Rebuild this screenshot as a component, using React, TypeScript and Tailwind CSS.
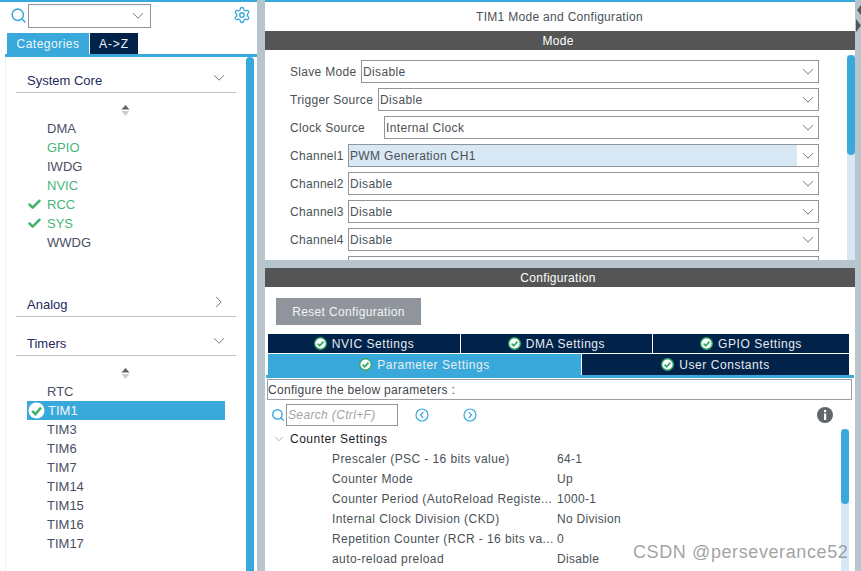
import React from "react";
import { ChevronDown, Search, Settings, Check } from "lucide-react";

const font = "font-['Liberation_Sans',Arial,sans-serif]";

function Chev({ className = "" }: { className?: string }) {
  return (
    <svg width="12" height="8" viewBox="0 0 12 8" fill="none" className={className}>
      <path d="M1 1.2 L6 6.2 L11 1.2" stroke="#6f7880" strokeWidth="1" />
    </svg>
  );
}

function SortIcon() {
  return (
    <svg width="9" height="11" viewBox="0 0 9 11" className="block">
      <path d="M4.5 0 L8.5 4.5 H0.5 Z" fill="#5f6468" />
      <path d="M4.5 11 L8.5 6 H0.5 Z" fill="#c9cdd0" />
    </svg>
  );
}

function CircleCheck() {
  return (
    <svg width="13" height="13" viewBox="0 0 13 13" className="shrink-0">
      <circle cx="6.5" cy="6.5" r="5.8" fill="#ffffff" stroke="#35a765" strokeWidth="1.4" />
      <path d="M3.6 6.7 L5.7 8.8 L9.5 4.6" fill="none" stroke="#35a765" strokeWidth="1.8" />
    </svg>
  );
}

function SectionHead({ title, open, className = "" }: { title: string; open: boolean; className?: string }) {
  return (
    <div className={`ml-[16px] w-[220px] h-[20px] border-b border-[#b9c5cc] flex items-start justify-between pl-[11px] pr-[12px] ${className}`}>
      <span className="text-[13px] leading-[16px] text-[#1d2a5c]">{title}</span>
      <Chev className={open ? "mt-[1px] mr-[-1px]" : "mt-[1px] mr-[-1px] -rotate-90"} />
    </div>
  );
}

function Item({ name, color = "text-[#4b4f63]", check }: { name: string; color?: string; check?: boolean }) {
  return (
    <div className="h-[19px] flex items-center relative pl-[47px]">
      {check && <Check size={15} strokeWidth={4} color="#45b26b" className="absolute left-[27px] top-[2px]" />}
      <span className={`text-[13px] leading-[19px] ${color}`}>{name}</span>
    </div>
  );
}

function ModeRow({ label, labelW, value, hi }: { label: string; labelW: string; value: string; hi?: boolean }) {
  return (
    <div className="flex items-center h-[23px] mb-[5px] pl-[25px]">
      <span className={`${labelW} shrink-0 text-[12px] tracking-[0.3px] text-[#4a5156] whitespace-nowrap`}>{label}</span>
      <div className="w-0 grow mr-[36px] h-[23px] border border-[#8f959b] flex items-center justify-between bg-white">
        <span className={`h-full grow flex items-center pl-[1px] text-[12px] tracking-[0.35px] text-[#4a5156] ${hi ? "bg-[#d9e8f5]" : ""}`}>{value}</span>
        <span className="w-[21px] shrink-0 flex justify-center"><Chev /></span>
      </div>
    </div>
  );
}

function Tab({ label, className }: { label: string; className: string }) {
  return (
    <div className={`flex items-center justify-center gap-[5px] text-[12px] tracking-[0.55px] text-[#e8edf2] ${className}`}>
      <CircleCheck />
      <span>{label}</span>
    </div>
  );
}

function Param({ name, value }: { name: string; value: string }) {
  return (
    <div className="flex h-[20px] items-center pl-[67px] text-[12px] text-[#4a5156]">
      <span className="w-[225px] shrink-0 whitespace-nowrap tracking-[0.42px]">{name}</span>
      <span className="tracking-[0.3px]">{value}</span>
    </div>
  );
}

export default function App() {
  return (
    <div className={`relative w-[861px] h-[571px] overflow-hidden bg-[#b9c5cc] flex ${font}`}>
      {/* left panel */}
      <div className="w-[257px] h-full bg-white border-t-2 border-[#39a9dc] shrink-0 flex flex-col">
        <div className="h-[31px] shrink-0 flex items-start pt-[2px] pl-[10px] pr-[6px]">
          <Search size={17} strokeWidth={2.2} color="#39a9dc" className="mt-[3px] mr-[1px]" />
          <div className="w-[123px] h-[24px] border border-[#8f959b] flex items-center justify-end pr-[6px]"><Chev /></div>
          <div className="grow" />
          <Settings size={18} strokeWidth={1.8} color="#39a9dc" className="mt-[2px]" />
        </div>
        <div className="h-[21px] shrink-0 flex pl-[7px]">
          <div className="w-[82px] bg-[#39a9dc] text-[#eef6fb] text-[12px] tracking-[0.5px] flex items-center justify-center">Categories</div>
          <div className="ml-[1px] w-[48px] bg-[#012249] text-[#eef6fb] text-[12px] tracking-[0.9px] flex items-center justify-center">A-&gt;Z</div>
        </div>
        <div className="ml-[5px] h-[3px] shrink-0 bg-[#39a9dc]" />
        <div className="relative grow ml-[5px] border-l border-[#eef0f1] overflow-hidden">
          <div className="absolute right-[3px] top-0 bottom-0 w-[8px] bg-[#39a9dc] rounded-t-[4px]" />
          <div className="ml-[-6px] pt-[16px]">
            <SectionHead title="System Core" open />
            <div className="h-[26px] pl-[121px] pt-[12px]"><SortIcon /></div>
            <div>
              <Item name="DMA" />
              <Item name="GPIO" color="text-[#48b67a]" />
              <Item name="IWDG" />
              <Item name="NVIC" color="text-[#48b67a]" />
              <Item name="RCC" color="text-[#48b67a]" check />
              <Item name="SYS" color="text-[#48b67a]" check />
              <Item name="WWDG" />
            </div>
            <SectionHead title="Analog" open={false} className="mt-[45px]" />
            <SectionHead title="Timers" open className="mt-[19px]" />
            <div className="h-[26px] pl-[121px] pt-[12px]"><SortIcon /></div>
            <div>
              <Item name="RTC" />
              <div className="ml-[27px] w-[198px] h-[19px] bg-[#39a9dc] flex items-center relative pl-[21px]">
                <svg width="17" height="17" viewBox="0 0 17 17" className="absolute left-[1px] top-[1px]">
                  <circle cx="8.5" cy="8.5" r="8" fill="#ffffff" />
                  <path d="M4.2 8.8 L7.4 12 L13 5.6" fill="none" stroke="#45b26b" strokeWidth="2.6" />
                </svg>
                <span className="text-[13px] text-[#f2f8fc]">TIM1</span>
              </div>
              {["TIM3", "TIM6", "TIM7", "TIM14", "TIM15", "TIM16", "TIM17"].map((t) => (
                <Item key={t} name={t} />
              ))}
            </div>
          </div>
        </div>
      </div>

      {/* right panel */}
      <div className="ml-[8px] w-[590px] h-full shrink-0 flex flex-col">
        <div className="h-[260px] shrink-0 bg-white border-t-2 border-[#39a9dc] flex flex-col overflow-hidden">
          <div className="h-[29px] shrink-0 pr-[1px] flex items-center justify-center text-[12px] tracking-[0.3px] text-[#4a5156]">TIM1 Mode and Configuration</div>
          <div className="h-[19px] shrink-0 pr-[4px] bg-[#545554] text-white text-[12px] tracking-[0.3px] flex items-center justify-center">Mode</div>
          <div className="relative grow pt-[10px]">
            <div className="absolute right-0 top-[5px] bottom-0 w-[8px] bg-[#d7e7f5]" />
            <div className="absolute right-0 top-[5px] h-[100px] w-[8px] bg-[#39a9dc] rounded-[4px]" />
            <ModeRow label="Slave Mode" labelW="w-[71px]" value="Disable" />
            <ModeRow label="Trigger Source" labelW="w-[88px]" value="Disable" />
            <ModeRow label="Clock Source" labelW="w-[94px]" value="Internal Clock" />
            <ModeRow label="Channel1" labelW="w-[58px]" value="PWM Generation CH1" hi />
            <ModeRow label="Channel2" labelW="w-[58px]" value="Disable" />
            <ModeRow label="Channel3" labelW="w-[58px]" value="Disable" />
            <ModeRow label="Channel4" labelW="w-[58px]" value="Disable" />
            <ModeRow label="" labelW="w-[58px]" value="" />
          </div>
        </div>
        <div className="mt-[8px] grow bg-white flex flex-col min-h-0 overflow-hidden">
          <div className="h-[19px] shrink-0 pr-[4px] bg-[#545554] text-white text-[12px] tracking-[0.3px] flex items-center justify-center">Configuration</div>
          <div className="h-[47px] shrink-0 pt-[11px] pl-[11px]">
            <div className="w-[145px] h-[27px] bg-[#8f959b] text-[#f2f4f5] text-[12px] tracking-[0.35px] flex items-center justify-center">Reset Configuration</div>
          </div>
          <div className="h-[19px] shrink-0 ml-[3px] w-[581px] flex gap-[1px]">
            <Tab label="NVIC Settings" className="w-[192px] bg-[#012249]" />
            <Tab label="DMA Settings" className="w-[191px] bg-[#012249]" />
            <Tab label="GPIO Settings" className="w-[196px] bg-[#012249]" />
          </div>
          <div className="h-[21px] mt-[1px] shrink-0 ml-[3px] w-[581px] flex gap-[1px]">
            <Tab label="Parameter Settings" className="w-[313px] bg-[#39a9dc]" />
            <Tab label="User Constants" className="w-[267px] bg-[#012249]" />
          </div>
          <div className="h-[3px] ml-[1px] w-[588px] shrink-0 bg-[#39a9dc]" />
          <div className="ml-[2px] mt-[1px] w-[585px] h-[21px] shrink-0 border border-[#9a9fa3] flex items-center text-[12px] tracking-[0.3px] text-[#3f464b]">Configure the below parameters :</div>
          <div className="relative grow">
            <div className="absolute right-[6px] top-[29px] bottom-0 w-[8px] bg-[#d7e7f5]" />
            <div className="absolute right-[6px] top-[29px] h-[75px] w-[8px] bg-[#39a9dc] rounded-[4px]" />
            <div className="h-[29px] flex items-center pl-[6px]">
              <Search size={14} strokeWidth={2.4} color="#39a9dc" className="mr-[1px]" />
              <div className="w-[112px] h-[22px] border border-[#8f959b] flex items-center pl-[1px] text-[12px] italic tracking-[0.35px] text-[#a0a4a8]">Search (Ctrl+F)</div>
              <svg width="14" height="14" viewBox="0 0 14 14" className="ml-[17px]" fill="none">
                <circle cx="7" cy="7" r="6" stroke="#39a9dc" strokeWidth="1.2" />
                <path d="M8.2 4.2 L5.4 7 L8.2 9.8" stroke="#39a9dc" strokeWidth="1.2" />
              </svg>
              <svg width="14" height="14" viewBox="0 0 14 14" className="ml-[34px]" fill="none">
                <circle cx="7" cy="7" r="6" stroke="#39a9dc" strokeWidth="1.2" />
                <path d="M5.8 4.2 L8.6 7 L5.8 9.8" stroke="#39a9dc" strokeWidth="1.2" />
              </svg>
              <svg width="16" height="16" viewBox="0 0 16 16" className="ml-[340px]">
                <circle cx="8" cy="8" r="8" fill="#62666a" />
                <rect x="7" y="3" width="2.2" height="2.2" fill="#fff" />
                <rect x="7" y="6.5" width="2.2" height="6.5" fill="#fff" />
              </svg>
            </div>
            <div className="h-[20px] flex items-center pl-[7px]">
              <ChevronDown size={14} strokeWidth={1} color="#6f7880" className="mr-[4px]" />
              <span className="text-[12px] tracking-[0.5px] text-[#1c2126]">Counter Settings</span>
            </div>
            <Param name="Prescaler (PSC - 16 bits value)" value="64-1" />
            <Param name="Counter Mode" value="Up" />
            <Param name="Counter Period (AutoReload Registe..." value="1000-1" />
            <Param name="Internal Clock Division (CKD)" value="No Division" />
            <Param name="Repetition Counter (RCR - 16 bits va..." value="0" />
            <Param name="auto-reload preload" value="Disable" />
          </div>
        </div>
      </div>

      {/* collapse arrows in the gutter */}
      <svg width="6" height="28" viewBox="0 0 6 28" className="absolute left-[855px] top-[5px]">
        <path d="M6 0 L2 5 L6 10 Z" fill="#545554" />
        <path d="M1 14 L6 20.5 L1 27 Z" fill="#545554" />
      </svg>

      {/* watermark */}
      <div className="absolute left-[633px] top-[541px] text-[18px] leading-[22px] tracking-[0.6px] text-[#8a8a8a]/80 whitespace-nowrap">CSDN @perseverance52</div>
    </div>
  );
}
